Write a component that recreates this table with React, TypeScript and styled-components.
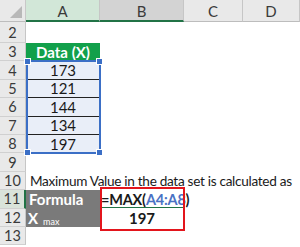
import React from 'react'
import styled, { createGlobalStyle } from 'styled-components'

const GlobalStyle = createGlobalStyle`
  html, body {
    margin: 0;
    padding: 0;
    background: #ffffff;
  }
  body {
    font-family: 'Lato', 'Liberation Sans', sans-serif;
  }
`

type Tone = 'plain' | 'active' | 'selected'

const Sheet = styled.div`
  position: relative;
  display: grid;
  grid-template-columns: 26px 74px 84px 59px 57px;
  grid-template-rows: 22px 21px repeat(11, 18.4px);
  width: 300px;
  height: 247px;
  overflow: hidden;
  background: #ffffff;
  font-family: 'Lato', 'Liberation Sans', sans-serif;
`

const Corner = styled.div`
  position: relative;
  background: #e9e9e9;
  border-right: 1px solid #c8c8c8;
  border-bottom: 1px solid #bdbdbd;
  box-sizing: border-box;

  &::after {
    content: '';
    position: absolute;
    right: 3px;
    bottom: 3px;
    width: 0;
    height: 0;
    border-left: 12px solid transparent;
    border-bottom: 12px solid #b8b8b8;
  }
`

const ColHead = styled.div<{ $tone: Tone }>`
  display: flex;
  align-items: center;
  justify-content: center;
  box-sizing: border-box;
  font-size: 15px;
  color: #3a3a3a;
  background: ${(p) =>
    p.$tone === 'selected' ? '#d2e7d8' : p.$tone === 'active' ? '#d3d3d3' : '#e9e9e9'};
  border-right: 1px solid #c6c6c6;
  border-bottom: ${(p) => (p.$tone === 'plain' ? '1px solid #bdbdbd' : '2px solid #217346')};
  padding-top: ${(p) => (p.$tone === 'plain' ? '0' : '1px')};
`

const RowHead = styled.div<{ $active?: boolean }>`
  display: flex;
  align-items: center;
  justify-content: center;
  box-sizing: border-box;
  font-size: 14.5px;
  color: #3a3a3a;
  background: ${(p) => (p.$active ? '#d9e3da' : '#e9e9e9')};
  border-bottom: 1px solid #d0d0d0;
  border-right: ${(p) => (p.$active ? '2px solid #217346' : '1px solid #c6c6c6')};
`

type Fill = 'none' | 'green' | 'blue' | 'gray'

const fills: Record<Fill, string> = {
  none: 'transparent',
  green: '#12a04b',
  blue: '#e9eef8',
  gray: '#7a7a7a',
}

const Cell = styled.div<{
  $fill?: Fill
  $align?: 'left' | 'center'
  $bold?: boolean
  $light?: boolean
  $lineBelow?: boolean
  $span?: number
}>`
  position: relative;
  display: flex;
  align-items: center;
  justify-content: ${(p) => (p.$align === 'center' ? 'center' : 'flex-start')};
  box-sizing: border-box;
  padding: 0 3px;
  white-space: nowrap;
  font-size: 15px;
  font-weight: ${(p) => (p.$bold ? 700 : 400)};
  color: ${(p) => (p.$light ? '#ffffff' : '#1a1a1a')};
  background: ${(p) => fills[p.$fill ?? 'none']};
  border-bottom: ${(p) => (p.$lineBelow ? '1px solid #222222' : 'none')};
  grid-column: ${(p) => (p.$span ? `span ${p.$span}` : 'auto')};
`

const Note = styled(Cell)`
  font-size: 13.6px;
  letter-spacing: -0.3px;
  padding-left: 4px;
`

const Formula = styled(Cell)`
  padding-left: 1px;
  font-size: 14.5px;
  letter-spacing: -0.2px;
`

const Selection = styled.div`
  position: absolute;
  left: 26px;
  top: 60px;
  width: 75px;
  height: 94px;
  box-sizing: border-box;
  border: 2px solid #3b6fc6;
  pointer-events: none;
`

const Handle = styled.span<{ $x: 'left' | 'right'; $y: 'top' | 'bottom' }>`
  position: absolute;
  ${(p) => p.$x}: -4px;
  ${(p) => p.$y}: -4px;
  width: 5px;
  height: 5px;
  background: #3b6fc6;
  border: 1px solid #ffffff;
`

const RedBox = styled.div`
  position: absolute;
  left: 100px;
  top: 187px;
  width: 85px;
  height: 44px;
  box-sizing: border-box;
  border: 2px solid #e3151c;
  pointer-events: none;
`

const EditLine = styled.div`
  position: absolute;
  left: 102px;
  top: 207px;
  width: 81px;
  height: 1px;
  background: #217346;
`

const Ref = styled.span`
  color: #4a72c4;
`

const Caret = styled.span`
  display: inline-block;
  width: 1px;
  height: 15px;
  margin-left: 3px;
  background: #1a1a1a;
`

const Sub = styled.span`
  font-size: 9px;
  font-weight: 400;
  margin-left: 5px;
  position: relative;
  top: 4px;
`

const data = ['173', '121', '144', '134', '197']

function Blank({ n }: { n: number }) {
  return (
    <>
      {Array.from({ length: n }).map((_, i) => (
        <Cell key={i} />
      ))}
    </>
  )
}

export default function App() {
  return (
    <>
      <GlobalStyle />
      <Sheet>
        <Corner />
        <ColHead $tone="selected">A</ColHead>
        <ColHead $tone="active">B</ColHead>
        <ColHead $tone="plain">C</ColHead>
        <ColHead $tone="plain">D</ColHead>

        <RowHead>2</RowHead>
        <Blank n={4} />

        <RowHead>3</RowHead>
        <Cell $fill="green" $align="center" $bold $light>
          Data (X)
        </Cell>
        <Blank n={3} />

        {data.map((v, i) => (
          <React.Fragment key={v + i}>
            <RowHead>{i + 4}</RowHead>
            <Cell $fill="blue" $align="center" $lineBelow={i < data.length - 1}>
              {v}
            </Cell>
            <Blank n={3} />
          </React.Fragment>
        ))}

        <RowHead>9</RowHead>
        <Blank n={4} />

        <RowHead>10</RowHead>
        <Note $span={4}>Maximum Value in the data set is calculated as</Note>

        <RowHead $active>11</RowHead>
        <Cell $fill="gray" $bold $light>
          Formula
        </Cell>
        <Formula $bold>
          =MAX(<Ref>A4:A8</Ref>)<Caret />
        </Formula>
        <Blank n={2} />

        <RowHead>12</RowHead>
        <Cell $fill="gray" $bold $light style={{ paddingLeft: 2 }}>
          X<Sub>max</Sub>
        </Cell>
        <Cell $bold $align="center">
          197
        </Cell>
        <Blank n={2} />

        <RowHead>13</RowHead>
        <Blank n={4} />

        <Selection>
          <Handle $x="left" $y="top" />
          <Handle $x="right" $y="top" />
          <Handle $x="left" $y="bottom" />
          <Handle $x="right" $y="bottom" />
        </Selection>
        <EditLine />
        <RedBox />
      </Sheet>
    </>
  )
}
